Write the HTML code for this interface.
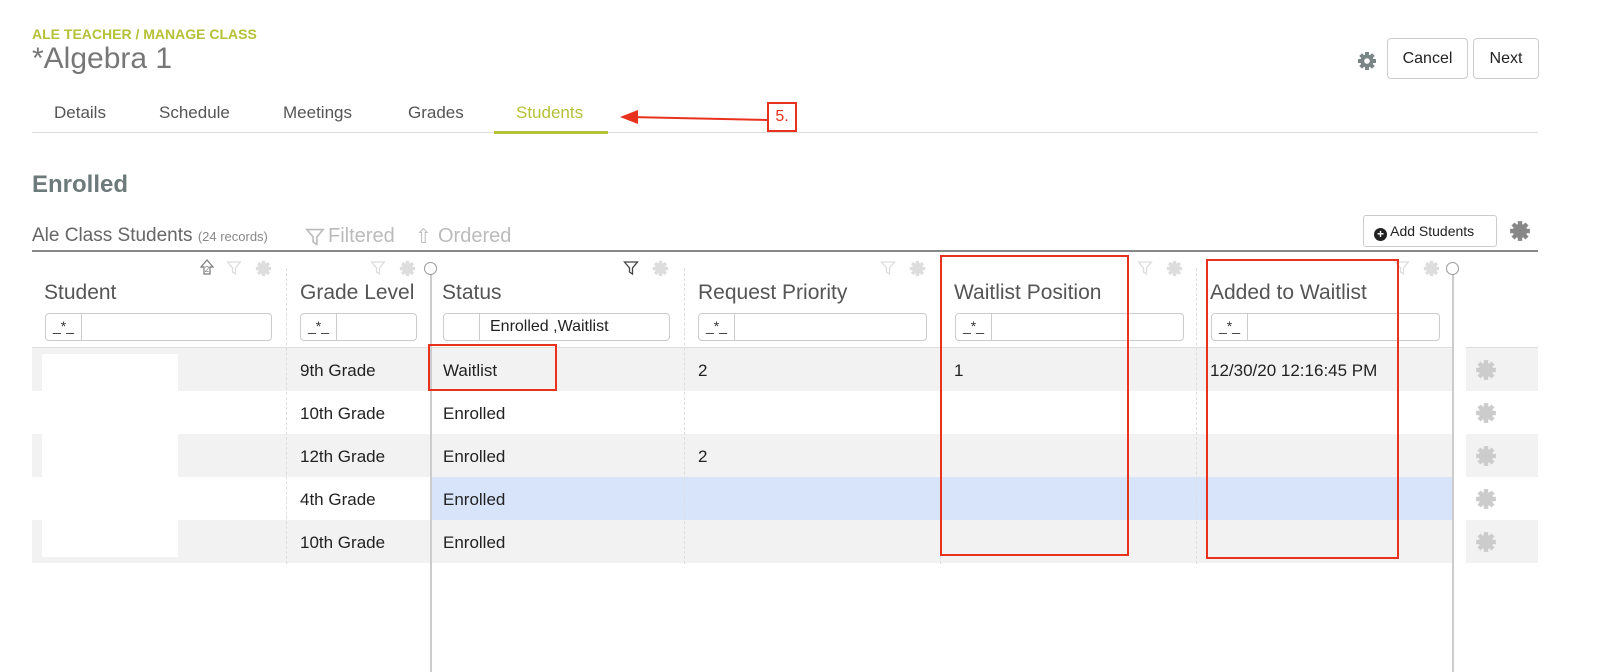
<!DOCTYPE html>
<html><head><meta charset="utf-8"><style>
*{margin:0;padding:0;box-sizing:border-box}
body{width:1600px;height:672px;background:#fff;font-family:"Liberation Sans",sans-serif;position:relative;overflow:hidden;color:#222}
.a{position:absolute}
.t{font-size:17px;color:#555}
.hdr{font-size:21px;color:#555}
.inp{position:absolute;height:28px;border:1px solid #ccc;border-radius:4px;background:#fff}
.inp span{position:absolute;left:0;top:0;width:36px;height:26px;border-right:1px solid #ccc;font-size:14px;text-align:center;line-height:24px;color:#333}
.cell{position:absolute;font-size:17px;color:#222}
.red{position:absolute;border:2px solid #e8321e}
.vd{position:absolute;width:0;border-left:1px dashed #ddd}
.g{position:absolute}
</style></head><body>
<svg width="0" height="0" style="position:absolute"><defs><symbol id="gear" viewBox="0 0 20 20"><circle cx="10" cy="10" r="6.5"/><rect x="8" y="1" width="4" height="18"/><rect x="1" y="8" width="18" height="4"/><rect x="8" y="1" width="4" height="18" transform="rotate(45 10 10)"/><rect x="8" y="1" width="4" height="18" transform="rotate(-45 10 10)"/></symbol><symbol id="fun" viewBox="0 0 16 16"><path d="M1.5 2h13l-5 6v6l-3-2v-4z" fill="none" stroke="currentColor" stroke-width="1.3"/></symbol></defs></svg>
<div class="a" style="left:32px;top:26px;font-size:14px;font-weight:bold;color:#b5c136">ALE TEACHER / MANAGE CLASS</div>
<div class="a" style="left:32px;top:42px;font-size:30px;color:#777">*Algebra 1</div>

<svg class="a" style="left:1357px;top:51px" width="20" height="20" viewBox="0 0 20 20"><use href="#gear" fill="#7a8585"/><circle cx="10" cy="10" r="2.8" fill="#fff"/></svg>
<div class="a" style="left:1387px;top:38px;width:81px;height:41px;border:1px solid #ccc;border-radius:4px;font-size:16px;text-align:center;line-height:39px">Cancel</div>
<div class="a" style="left:1473px;top:38px;width:66px;height:41px;border:1px solid #ccc;border-radius:4px;font-size:16px;text-align:center;line-height:39px">Next</div>

<div class="a t" style="left:54px;top:103px">Details</div>
<div class="a t" style="left:159px;top:103px">Schedule</div>
<div class="a t" style="left:283px;top:103px">Meetings</div>
<div class="a t" style="left:408px;top:103px">Grades</div>
<div class="a t" style="left:516px;top:103px;color:#b5c136">Students</div>
<div class="a" style="left:32px;top:132px;width:1506px;height:1px;background:#ddd"></div>
<div class="a" style="left:494px;top:131px;width:114px;height:3px;background:#b5c136"></div>
<svg class="a" style="left:618px;top:100px" width="190" height="36"><line x1="14" y1="17" x2="150" y2="20" stroke="#e8321e" stroke-width="2"/><polygon points="2,17 20,10 20,24" fill="#e8321e"/></svg>
<div class="a" style="left:767px;top:102px;width:30px;height:30px;border:2px solid #e8321e;color:#e8321e;font-size:16px;text-align:center;line-height:26px">5.</div>

<div class="a" style="left:32px;top:171px;font-size:24px;font-weight:bold;color:#6d7a7a">Enrolled</div>
<div class="a" style="left:32px;top:225px;font-size:19px;color:#666">Ale Class Students <span style="font-size:13px;color:#888">(24 records)</span></div>
<svg class="a" style="left:305px;top:227px;color:#bbb" width="20" height="20"><use href="#fun" width="20" height="20"/></svg>
<div class="a" style="left:328px;top:225px;font-size:20px;color:#bbb">Filtered</div>
<div class="a" style="left:415px;top:224px;font-size:20px;color:#bbb">&#8679;</div>
<div class="a" style="left:438px;top:225px;font-size:20px;color:#bbb">Ordered</div>
<div class="a" style="left:1363px;top:215px;width:134px;height:32px;border:1px solid #ccc;border-radius:3px;font-size:14px;line-height:30px;padding-left:10px"><span style="display:inline-block;width:13px;height:13px;border-radius:50%;background:#222;color:#fff;font-size:12px;line-height:13px;text-align:center;vertical-align:-2px;font-weight:bold">+</span> Add Students</div>
<svg class="a" style="left:1509px;top:220px" width="22" height="22" viewBox="0 0 20 20"><use href="#gear" fill="#888"/></svg>
<div class="a" style="left:32px;top:250px;width:1506px;height:2px;background:#888"></div>

<div class="a" style="left:32px;top:348px;width:1506px;height:43px;background:#f2f2f2"></div>
<div class="a" style="left:32px;top:434px;width:1506px;height:43px;background:#f2f2f2"></div>
<div class="a" style="left:430px;top:477px;width:1022px;height:43px;background:#d8e4fa"></div>
<div class="a" style="left:32px;top:520px;width:1506px;height:43px;background:#f2f2f2"></div>
<div class="a" style="left:1452px;top:348px;width:14px;height:215px;background:#fff"></div>
<div class="a" style="left:42px;top:354px;width:136px;height:37px;background:#fff"></div>
<div class="a" style="left:42px;top:434px;width:136px;height:43px;background:#fff"></div>
<div class="a" style="left:42px;top:520px;width:136px;height:37px;background:#fff"></div>

<div class="vd" style="left:286px;top:268px;height:296px"></div>
<div class="vd" style="left:684px;top:268px;height:296px"></div>
<div class="vd" style="left:940px;top:268px;height:296px"></div>
<div class="vd" style="left:1196px;top:268px;height:296px"></div>
<div class="a" style="left:430px;top:274px;width:2px;height:398px;background:#ccc"></div>
<div class="a" style="left:1452px;top:274px;width:2px;height:398px;background:#ccc"></div>
<div class="a" style="left:424px;top:262px;width:13px;height:13px;border:1.5px solid #999;border-radius:50%;background:#fff"></div>
<div class="a" style="left:1446px;top:262px;width:13px;height:13px;border:1.5px solid #999;border-radius:50%;background:#fff"></div>
<div class="a" style="left:32px;top:347px;width:1420px;height:1px;background:#ddd"></div>
<div class="a" style="left:1466px;top:347px;width:72px;height:1px;background:#ddd"></div>

<!-- header icons -->
<svg class="a" style="left:199px;top:259px" width="16" height="18" viewBox="0 0 16 18"><path d="M8 1L2 8h3v7h6V8h3z" fill="none" stroke="#777" stroke-width="1.2"/><text x="8" y="13" font-size="8" text-anchor="middle" fill="#777" font-family="Liberation Sans">2</text></svg>
<svg class="a" style="left:226px;top:260px;color:#ddd" width="16" height="16"><use href="#fun"/></svg>
<svg class="a" style="left:255px;top:260px" width="17" height="17" viewBox="0 0 20 20"><use href="#gear" fill="#ddd"/></svg>
<svg class="a" style="left:370px;top:260px;color:#ddd" width="16" height="16"><use href="#fun"/></svg>
<svg class="a" style="left:399px;top:260px" width="17" height="17" viewBox="0 0 20 20"><use href="#gear" fill="#ddd"/></svg>
<svg class="a" style="left:623px;top:260px;color:#444" width="16" height="16"><use href="#fun"/></svg>
<svg class="a" style="left:652px;top:260px" width="17" height="17" viewBox="0 0 20 20"><use href="#gear" fill="#ddd"/></svg>
<svg class="a" style="left:880px;top:260px;color:#ddd" width="16" height="16"><use href="#fun"/></svg>
<svg class="a" style="left:909px;top:260px" width="17" height="17" viewBox="0 0 20 20"><use href="#gear" fill="#ddd"/></svg>
<svg class="a" style="left:1137px;top:260px;color:#ddd" width="16" height="16"><use href="#fun"/></svg>
<svg class="a" style="left:1166px;top:260px" width="17" height="17" viewBox="0 0 20 20"><use href="#gear" fill="#ddd"/></svg>
<svg class="a" style="left:1394px;top:260px;color:#ddd" width="16" height="16"><use href="#fun"/></svg>
<svg class="a" style="left:1423px;top:260px" width="17" height="17" viewBox="0 0 20 20"><use href="#gear" fill="#ddd"/></svg>

<div class="a hdr" style="left:44px;top:281px">Student</div>
<div class="a hdr" style="left:300px;top:281px">Grade Level</div>
<div class="a hdr" style="left:442px;top:281px">Status</div>
<div class="a hdr" style="left:698px;top:281px">Request Priority</div>
<div class="a hdr" style="left:954px;top:281px">Waitlist Position</div>
<div class="a hdr" style="left:1210px;top:281px">Added to Waitlist</div>

<div class="inp" style="left:45px;top:313px;width:227px"><span>_*_</span></div>
<div class="inp" style="left:300px;top:313px;width:117px"><span>_*_</span></div>
<div class="inp" style="left:443px;top:313px;width:227px"><span></span><div class="a" style="left:46px;top:4px;font-size:16px">Enrolled ,Waitlist</div></div>
<div class="inp" style="left:698px;top:313px;width:229px"><span>_*_</span></div>
<div class="inp" style="left:955px;top:313px;width:229px"><span>_*_</span></div>
<div class="inp" style="left:1211px;top:313px;width:229px"><span>_*_</span></div>

<div class="cell" style="left:300px;top:361px">9th Grade</div>
<div class="cell" style="left:300px;top:404px">10th Grade</div>
<div class="cell" style="left:300px;top:447px">12th Grade</div>
<div class="cell" style="left:300px;top:490px">4th Grade</div>
<div class="cell" style="left:300px;top:533px">10th Grade</div>
<div class="cell" style="left:443px;top:361px">Waitlist</div>
<div class="cell" style="left:443px;top:404px">Enrolled</div>
<div class="cell" style="left:443px;top:447px">Enrolled</div>
<div class="cell" style="left:443px;top:490px">Enrolled</div>
<div class="cell" style="left:443px;top:533px">Enrolled</div>
<div class="cell" style="left:698px;top:361px">2</div>
<div class="cell" style="left:698px;top:447px">2</div>
<div class="cell" style="left:954px;top:361px">1</div>
<div class="cell" style="left:1210px;top:361px">12/30/20 12:16:45 PM</div>
<svg class="g" style="left:1475px;top:359px" width="22" height="22" viewBox="0 0 20 20"><use href="#gear" fill="#ccc"/></svg>
<svg class="g" style="left:1475px;top:402px" width="22" height="22" viewBox="0 0 20 20"><use href="#gear" fill="#ccc"/></svg>
<svg class="g" style="left:1475px;top:445px" width="22" height="22" viewBox="0 0 20 20"><use href="#gear" fill="#ccc"/></svg>
<svg class="g" style="left:1475px;top:488px" width="22" height="22" viewBox="0 0 20 20"><use href="#gear" fill="#ccc"/></svg>
<svg class="g" style="left:1475px;top:531px" width="22" height="22" viewBox="0 0 20 20"><use href="#gear" fill="#ccc"/></svg>

<div class="red" style="left:428px;top:344px;width:129px;height:47px"></div>
<div class="red" style="left:940px;top:255px;width:189px;height:301px"></div>
<div class="red" style="left:1206px;top:259px;width:193px;height:300px"></div>
</body></html>
